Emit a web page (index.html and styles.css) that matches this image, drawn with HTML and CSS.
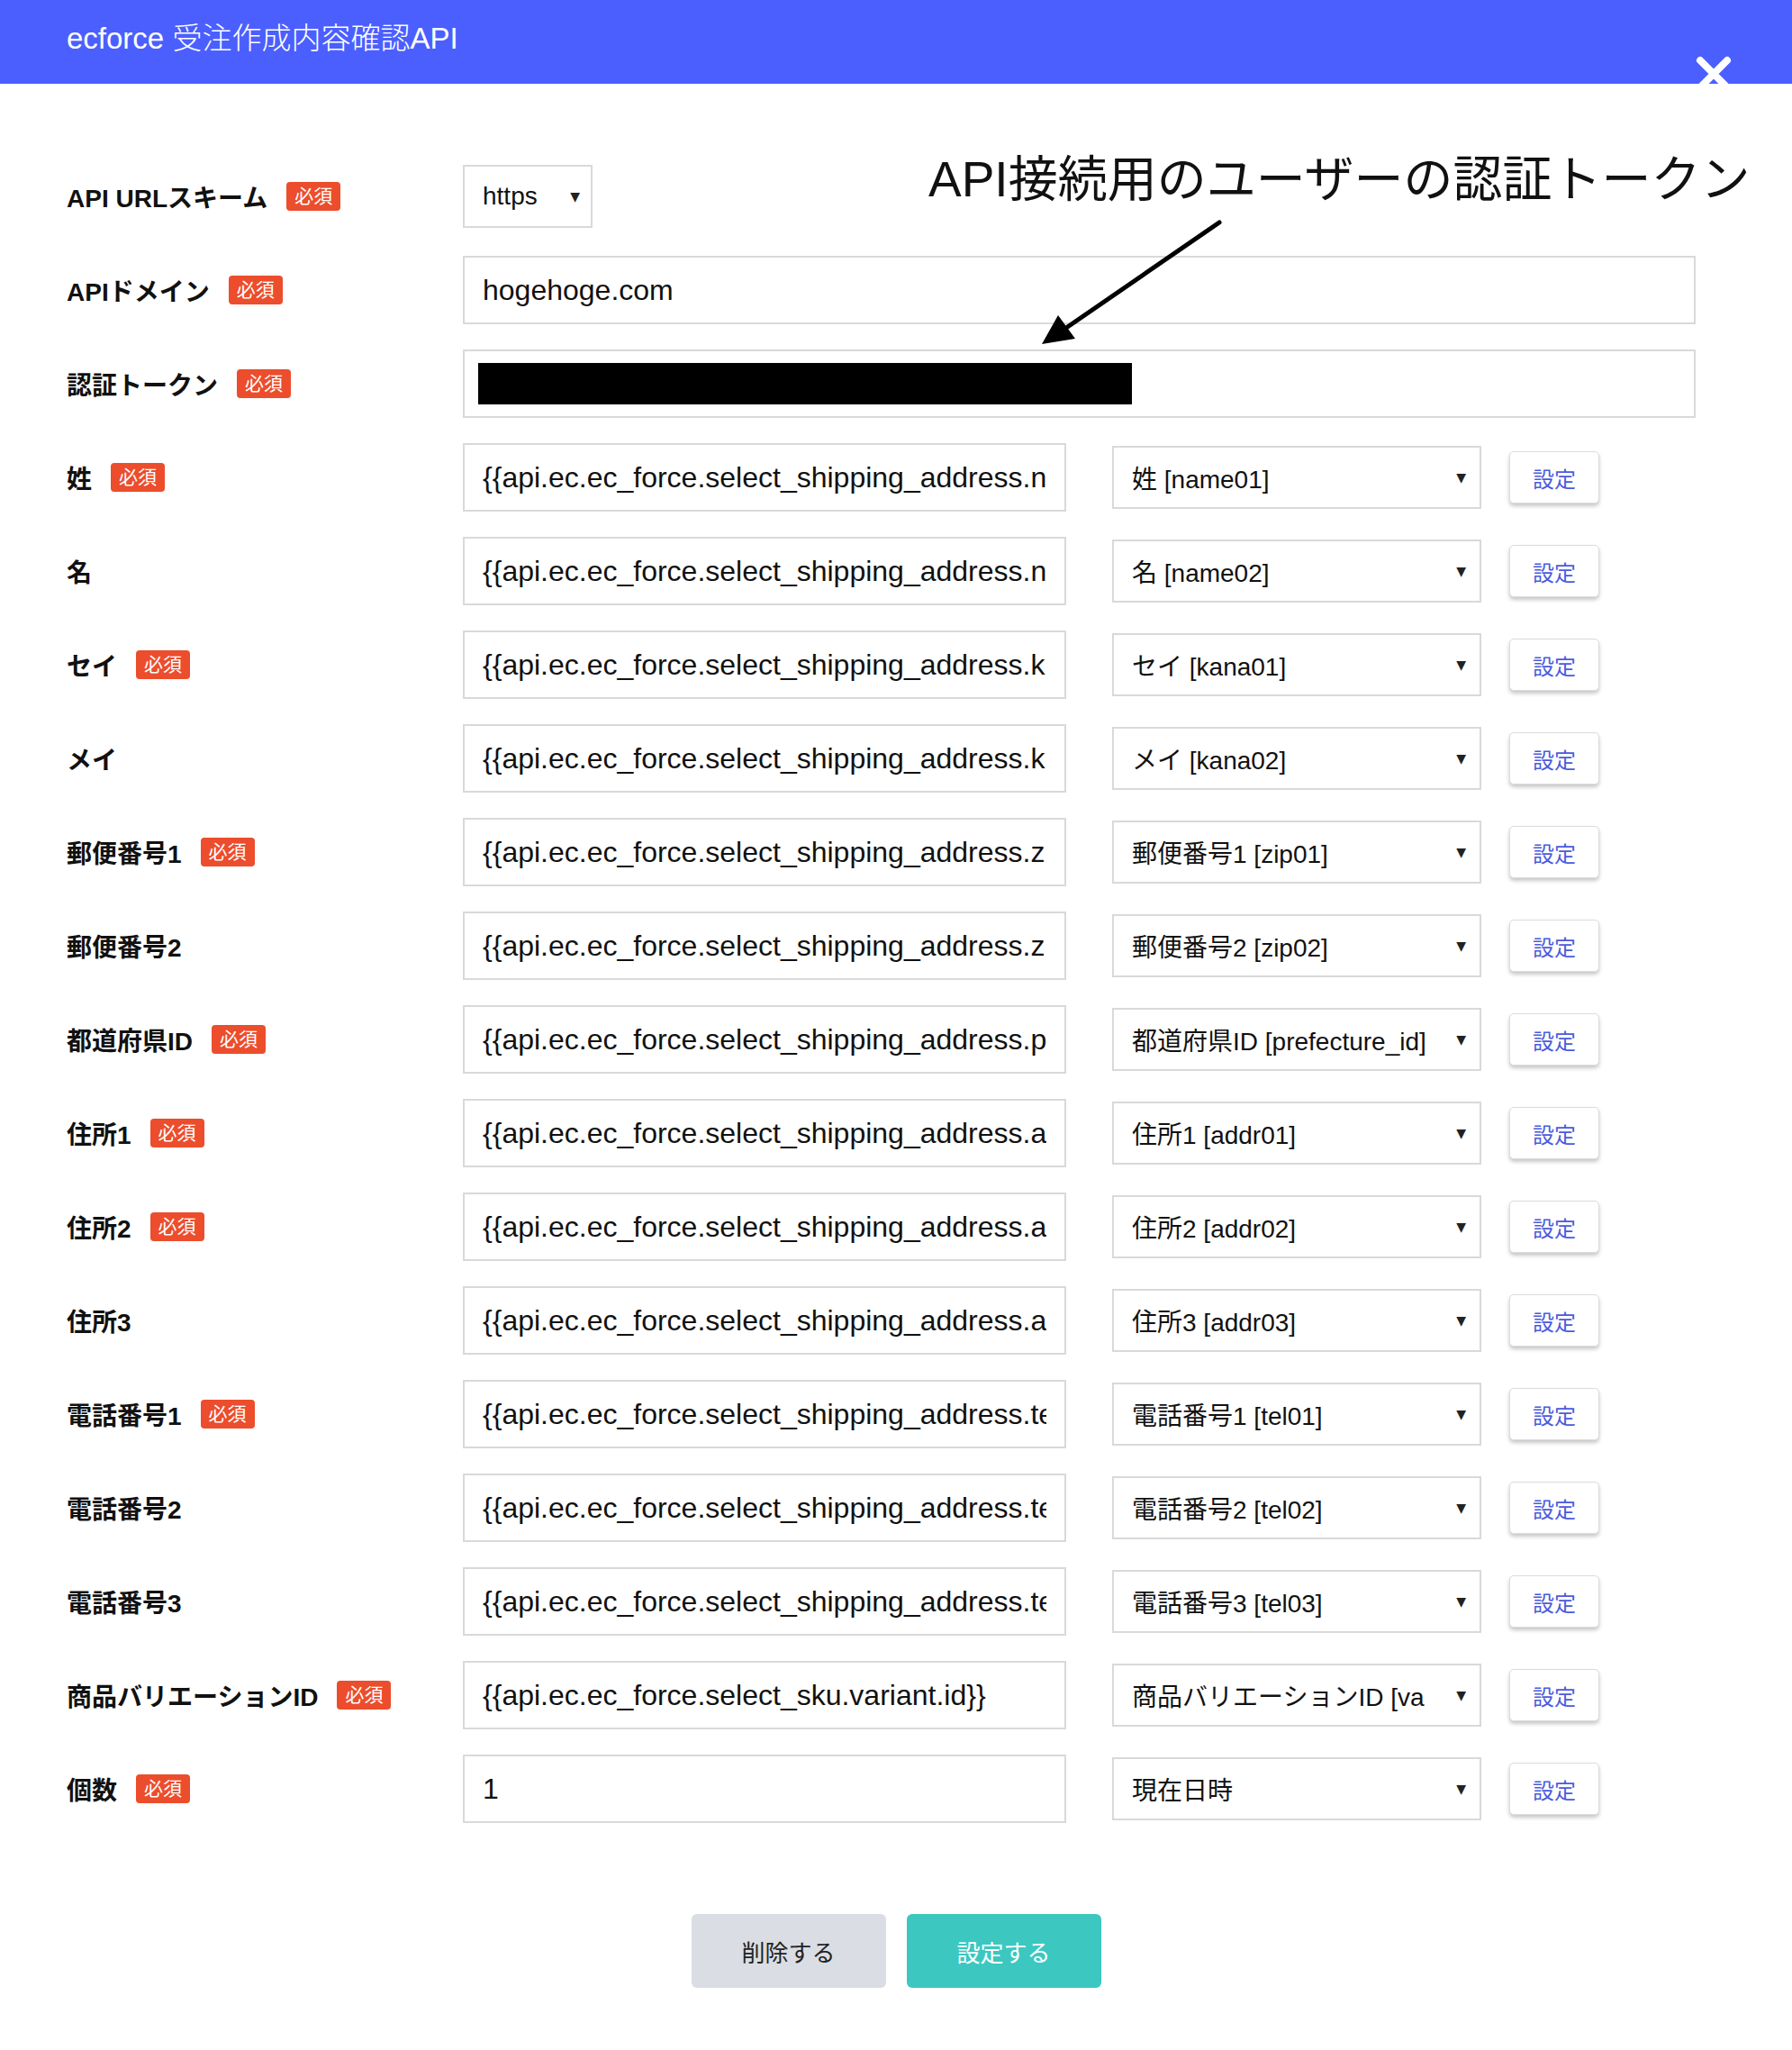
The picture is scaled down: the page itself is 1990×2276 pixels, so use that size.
FILE: index.html
```html
<!DOCTYPE html>
<html lang="ja">
<head>
    <meta charset="UTF-8">
    <meta name="viewport" content="width=device-width, initial-scale=1.0">
    <title>ecforce 受注作成内容確認API</title>
    <link rel="stylesheet" href="styles.css">
</head>
<body>

    <header class="modal-header">
        <h1 class="modal-title">ecforce 受注作成内容確認API</h1>
        <button class="close-btn" aria-label="閉じる">
            <svg width="40" height="40" viewBox="0 0 40 40">
                <path d="M5 5 L35 35 M35 5 L5 35" stroke="#fff" stroke-width="8" stroke-linecap="round" fill="none"/>
            </svg>
        </button>
    </header>

    <main class="modal-body">
        <!-- annotation on top of the form -->
        <div class="note">API接続用のユーザーの認証トークン</div>
        <svg class="note-arrow" width="230" height="160" viewBox="0 0 230 160">
            <line x1="214" y1="12" x2="44" y2="129" stroke="#000" stroke-width="5" stroke-linecap="round"/>
            <polygon points="17,147 35,115 54,141" fill="#000"/>
        </svg>

        <div class="form-row">
            <div class="label">API URLスキーム<span class="req">必須</span></div>
            <div class="select select-scheme"><span class="select-text">https</span><span class="caret">▼</span></div>
        </div>
        <div class="form-row">
            <div class="label">APIドメイン<span class="req">必須</span></div>
            <div class="field field-wide"><span class="field-text">hogehoge.com</span></div>
        </div>
        <div class="form-row">
            <div class="label">認証トークン<span class="req">必須</span></div>
            <div class="field field-wide field-token"><div class="redact"></div></div>
        </div>

        <div class="form-row">
            <div class="label">姓<span class="req">必須</span></div>
            <div class="field"><span class="field-text">{{api.ec.ec_force.select_shipping_address.n</span></div>
            <div class="select"><span class="select-text">姓 [name01]</span><span class="caret">▼</span></div>
            <button class="set-btn">設定</button>
        </div>
        <div class="form-row">
            <div class="label">名</div>
            <div class="field"><span class="field-text">{{api.ec.ec_force.select_shipping_address.n</span></div>
            <div class="select"><span class="select-text">名 [name02]</span><span class="caret">▼</span></div>
            <button class="set-btn">設定</button>
        </div>
        <div class="form-row">
            <div class="label">セイ<span class="req">必須</span></div>
            <div class="field"><span class="field-text">{{api.ec.ec_force.select_shipping_address.k</span></div>
            <div class="select"><span class="select-text">セイ [kana01]</span><span class="caret">▼</span></div>
            <button class="set-btn">設定</button>
        </div>
        <div class="form-row">
            <div class="label">メイ</div>
            <div class="field"><span class="field-text">{{api.ec.ec_force.select_shipping_address.k</span></div>
            <div class="select"><span class="select-text">メイ [kana02]</span><span class="caret">▼</span></div>
            <button class="set-btn">設定</button>
        </div>
        <div class="form-row">
            <div class="label">郵便番号1<span class="req">必須</span></div>
            <div class="field"><span class="field-text">{{api.ec.ec_force.select_shipping_address.z</span></div>
            <div class="select"><span class="select-text">郵便番号1 [zip01]</span><span class="caret">▼</span></div>
            <button class="set-btn">設定</button>
        </div>
        <div class="form-row">
            <div class="label">郵便番号2</div>
            <div class="field"><span class="field-text">{{api.ec.ec_force.select_shipping_address.z</span></div>
            <div class="select"><span class="select-text">郵便番号2 [zip02]</span><span class="caret">▼</span></div>
            <button class="set-btn">設定</button>
        </div>
        <div class="form-row">
            <div class="label">都道府県ID<span class="req">必須</span></div>
            <div class="field"><span class="field-text">{{api.ec.ec_force.select_shipping_address.p</span></div>
            <div class="select"><span class="select-text">都道府県ID [prefecture_id]</span><span class="caret">▼</span></div>
            <button class="set-btn">設定</button>
        </div>
        <div class="form-row">
            <div class="label">住所1<span class="req">必須</span></div>
            <div class="field"><span class="field-text">{{api.ec.ec_force.select_shipping_address.a</span></div>
            <div class="select"><span class="select-text">住所1 [addr01]</span><span class="caret">▼</span></div>
            <button class="set-btn">設定</button>
        </div>
        <div class="form-row">
            <div class="label">住所2<span class="req">必須</span></div>
            <div class="field"><span class="field-text">{{api.ec.ec_force.select_shipping_address.a</span></div>
            <div class="select"><span class="select-text">住所2 [addr02]</span><span class="caret">▼</span></div>
            <button class="set-btn">設定</button>
        </div>
        <div class="form-row">
            <div class="label">住所3</div>
            <div class="field"><span class="field-text">{{api.ec.ec_force.select_shipping_address.a</span></div>
            <div class="select"><span class="select-text">住所3 [addr03]</span><span class="caret">▼</span></div>
            <button class="set-btn">設定</button>
        </div>
        <div class="form-row">
            <div class="label">電話番号1<span class="req">必須</span></div>
            <div class="field"><span class="field-text">{{api.ec.ec_force.select_shipping_address.te</span></div>
            <div class="select"><span class="select-text">電話番号1 [tel01]</span><span class="caret">▼</span></div>
            <button class="set-btn">設定</button>
        </div>
        <div class="form-row">
            <div class="label">電話番号2</div>
            <div class="field"><span class="field-text">{{api.ec.ec_force.select_shipping_address.te</span></div>
            <div class="select"><span class="select-text">電話番号2 [tel02]</span><span class="caret">▼</span></div>
            <button class="set-btn">設定</button>
        </div>
        <div class="form-row">
            <div class="label">電話番号3</div>
            <div class="field"><span class="field-text">{{api.ec.ec_force.select_shipping_address.te</span></div>
            <div class="select"><span class="select-text">電話番号3 [tel03]</span><span class="caret">▼</span></div>
            <button class="set-btn">設定</button>
        </div>
        <div class="form-row">
            <div class="label">商品バリエーションID<span class="req">必須</span></div>
            <div class="field"><span class="field-text">{{api.ec.ec_force.select_sku.variant.id}}</span></div>
            <div class="select"><span class="select-text">商品バリエーションID [va</span><span class="caret">▼</span></div>
            <button class="set-btn">設定</button>
        </div>
        <div class="form-row">
            <div class="label">個数<span class="req">必須</span></div>
            <div class="field"><span class="field-text">1</span></div>
            <div class="select"><span class="select-text">現在日時</span><span class="caret">▼</span></div>
            <button class="set-btn">設定</button>
        </div>

        <div class="actions">
            <button class="btn btn-delete">削除する</button>
            <button class="btn btn-submit">設定する</button>
        </div>
    </main>

</body>
</html>
```

FILE: styles.css
```css
* {
    box-sizing: border-box;
}
body {
    margin: 0;
    background-color: #fff;
    color: #111;
    font-family: "Liberation Sans", "Noto Sans CJK JP", sans-serif;
}
.modal-header {
    position: relative;
    height: 93px;
    padding: 21px 74px 0;
    background-color: #4b5fff;
}
.modal-title {
    margin: 0;
    font-size: 33px;
    line-height: 44px;
    font-weight: 300;
    color: #fff;
}
.close-btn {
    position: absolute;
    left: 1883px;
    top: 62px;
    width: 40px;
    height: 40px;
    padding: 0;
    border: 0;
    background: none;
    z-index: 2;
}
.close-btn svg {
    display: block;
}
.modal-body {
    position: relative;
    padding: 87px 74px 0;
}
.note {
    position: absolute;
    left: 1031px;
    top: 79px;
    font-size: 55px;
    line-height: 55px;
    white-space: nowrap;
    color: #111;
}
.note-arrow {
    position: absolute;
    left: 1140px;
    top: 142px;
}
.form-row {
    display: flex;
    align-items: center;
    height: 76px;
    margin-bottom: 28px;
}
.label {
    display: flex;
    align-items: center;
    flex-shrink: 0;
    width: 440px;
    font-size: 28px;
    font-weight: bold;
    white-space: nowrap;
}
.req {
    margin-left: 21px;
    padding: 0 9px;
    height: 32px;
    line-height: 32px;
    border-radius: 4px;
    background-color: #ec4d2c;
    color: #fff;
    font-size: 21px;
    font-weight: normal;
}
.field {
    display: flex;
    align-items: center;
    flex-shrink: 0;
    width: 670px;
    height: 76px;
    padding: 0 20px;
    border: 2px solid #d9d9d9;
    font-size: 32px;
}
.field-text {
    flex: 1;
    min-width: 0;
    overflow: hidden;
    white-space: nowrap;
}
.field-wide {
    width: 1369px;
}
.field-token {
    padding-left: 15px;
}
.redact {
    width: 726px;
    height: 46px;
    background-color: #000;
}
.select {
    display: flex;
    align-items: center;
    flex-shrink: 0;
    width: 410px;
    height: 70px;
    margin-left: 51px;
    padding: 0 15px 0 20px;
    border: 2px solid #d9d9d9;
    font-size: 28px;
}
.select-scheme {
    width: 144px;
    margin-left: 0;
    padding-right: 12px;
}
.select-text {
    flex: 1;
    min-width: 0;
    overflow: hidden;
    white-space: nowrap;
}
.caret {
    margin-left: 12px;
    font-family: "DejaVu Sans", sans-serif;
    font-size: 14px;
    color: #222;
}
.set-btn {
    flex-shrink: 0;
    width: 100px;
    height: 58px;
    margin-left: 31px;
    padding: 0;
    border: 1px solid #dcdcdc;
    border-radius: 5px;
    background-color: #fff;
    box-shadow: 0 3px 4px rgba(0, 0, 0, 0.22);
    color: #4b5bdc;
    font-family: inherit;
    font-size: 24px;
}
.actions {
    display: flex;
    justify-content: center;
    gap: 23px;
    margin-top: 101px;
}
.btn {
    width: 216px;
    height: 82px;
    border: 0;
    border-radius: 6px;
    font-family: inherit;
    font-size: 26px;
}
.btn-delete {
    background-color: #dadde3;
    color: #222;
}
.btn-submit {
    background-color: #3cc8c0;
    color: #fff;
}
```
